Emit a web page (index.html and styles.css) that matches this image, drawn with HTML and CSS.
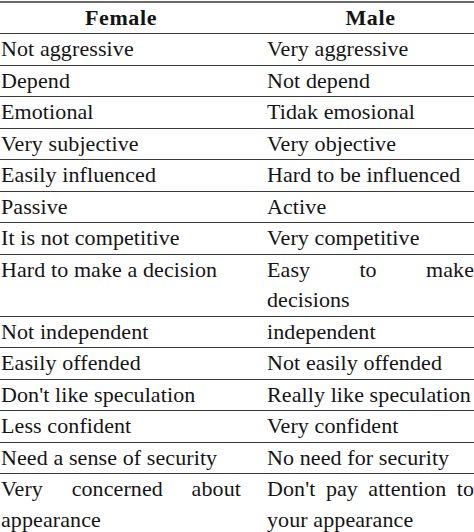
FILE: index.html
```html
<!DOCTYPE html>
<html>
<head>
<meta charset="utf-8">
<link rel="stylesheet" href="styles.css">
</head>
<body>
<table class="tbl">
<thead>
<tr><th class="c1">Female</th><th class="c2">Male</th></tr>
</thead>
<tbody>
<tr><td class="c1">Not aggressive</td><td class="c2">Very aggressive</td></tr>
<tr><td class="c1">Depend</td><td class="c2">Not depend</td></tr>
<tr><td class="c1">Emotional</td><td class="c2">Tidak emosional</td></tr>
<tr><td class="c1">Very subjective</td><td class="c2">Very objective</td></tr>
<tr><td class="c1">Easily influenced</td><td class="c2">Hard to be influenced</td></tr>
<tr><td class="c1">Passive</td><td class="c2">Active</td></tr>
<tr><td class="c1">It is not competitive</td><td class="c2">Very competitive</td></tr>
<tr><td class="c1">Hard to make a decision</td><td class="c2"><span class="jl">Easy to make</span>decisions</td></tr>
<tr><td class="c1">Not independent</td><td class="c2">independent</td></tr>
<tr><td class="c1">Easily offended</td><td class="c2">Not easily offended</td></tr>
<tr><td class="c1">Don't like speculation</td><td class="c2">Really like speculation</td></tr>
<tr><td class="c1">Less confident</td><td class="c2">Very confident</td></tr>
<tr><td class="c1">Need a sense of security</td><td class="c2">No need for security</td></tr>
<tr><td class="c1">Very concerned about appearance</td><td class="c2">Don't pay attention to your appearance</td></tr>
</tbody>
</table>
</body>
</html>
```
FILE: styles.css
```css
html, body {
  margin: 0;
  padding: 0;
  background: #fff;
  overflow: hidden;
}
.tbl {
  border-collapse: collapse;
  table-layout: fixed;
  width: 474px;
  font-family: "Liberation Serif", "Times New Roman", serif;
  font-size: 22px;
  letter-spacing: 0.1px;
  color: #141414;
  margin-top: 1px;
  border-top: 2px solid #6a6a6a;
}
.tbl th, .tbl td {
  padding: 0;
  line-height: 30.5px;
  vertical-align: top;
  text-align: justify;
  border-bottom: 1px solid #3a3a3a;
}
.tbl th {
  font-weight: bold;
  text-align: center;
  letter-spacing: 0.6px;
  line-height: 30px;
}
.c1 {
  width: 240px;
  padding-left: 1px !important;
  padding-right: 26px !important;
}
.c2 {
  width: 207px;
}
.jl {
  display: block;
  text-align: justify;
  text-align-last: justify;
}
```
